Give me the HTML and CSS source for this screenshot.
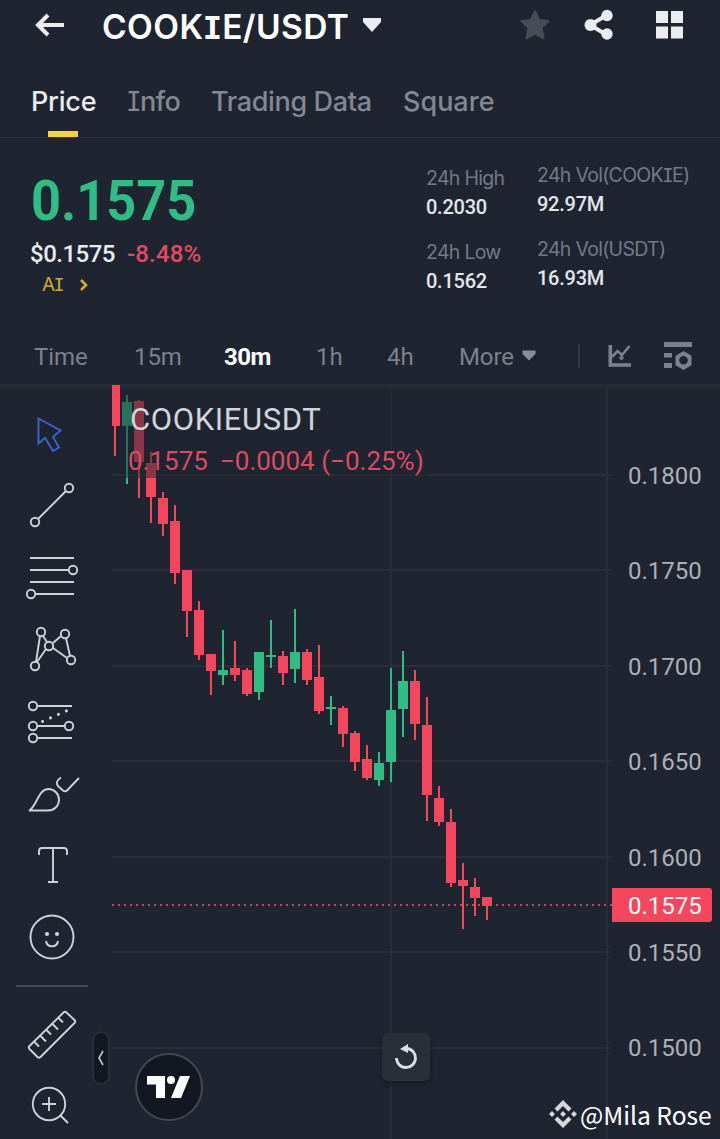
FILE: index.html
```html
<!DOCTYPE html>
<html lang="en">
<head>
<meta charset="utf-8">
<title>COOKIE/USDT</title>
<link rel="stylesheet" href="styles.css">
</head>
<body>
<header class="topbar">
  <svg class="back" width="32" height="24" viewBox="0 0 32 24"><path d="M15 2 5 12l10 10M4 12h27" fill="none" stroke="#eaecef" stroke-width="4"/></svg>
  <h1 class="pair"><span>COOK<span class="slab">I</span>E/USDT</span></h1>
  <svg class="caret" width="20" height="16" viewBox="0 0 20 16"><path d="M1 1h18v4l-9 10L1 5z" fill="#eaecef"/></svg>
  <svg class="star" width="32" height="32" viewBox="0 0 32 32"><path d="m16 2.500 4 8.700 9.300 1-7 6.500 2 10.300-8.300-4.700L7.700 29l2-10.300-7-6.500 9.300-1z" fill="#474d57" stroke="#474d57" stroke-width="2.500" stroke-linejoin="round"/></svg>
  <svg class="share" width="32" height="32" viewBox="0 0 32 32"><g fill="#eaecef"><path d="M7 16 24 6M7 16l17 10" stroke="#eaecef" stroke-width="4"/><circle cx="7.500" cy="16" r="6"/><circle cx="24" cy="6.500" r="5.700"/><circle cx="24" cy="25" r="5.700"/></g></svg>
  <svg class="apps" width="28" height="28" viewBox="0 0 28 28"><path d="M0 0h12v12H0zM15 0h12v12H15zM0 15.500h12v12H0zM15 15.500h12v12H15z" fill="#eaecef"/></svg>
</header>

<nav class="tabs">
  <a class="tab tab-on">Price</a>
  <a class="tab tab-info"><span class="slab">I</span>nfo</a>
  <a class="tab tab-data">Trading Data</a>
  <a class="tab tab-square">Square</a>
</nav>

<section class="summary">
  <div class="quote">
    <div class="last">0.1575</div>
    <div class="sub"><span class="usd">$0.1575</span><span class="chg">-8.48%</span></div>
    <div class="ai"><span>A<span class="slab">I</span></span><svg width="10" height="14" viewBox="0 0 10 14"><path d="m2 2 5 5-5 5" fill="none" stroke="#d3aa35" stroke-width="2.600"/></svg></div>
  </div>
  <dl class="stats stats-price">
    <dt>24h High</dt><dd>0.2030</dd>
    <dt class="low">24h Low</dt><dd>0.1562</dd>
  </dl>
  <dl class="stats stats-vol">
    <dt>24h Vol(COOK<span class="slab">I</span>E)</dt><dd>92.97M</dd>
    <dt>24h Vol(USDT)</dt><dd>16.93M</dd>
  </dl>
</section>

<nav class="frames">
  <span>Time</span><span>15m</span><span class="frame-on">30m</span><span>1h</span><span>4h</span>
  <span class="more">More<svg width="14" height="11" viewBox="0 0 14 11"><path d="M.5.500h13V4L7 10.500.500 4z" fill="#848e9c"/></svg></span>
  <i class="sep"></i>
  <svg class="tool-ind" width="24" height="24" viewBox="0 0 24 24"><g fill="none" stroke="#7c818d" stroke-width="3.600"><path d="M2.300 1v20H23"/><path d="m4 13 5.500-6 4.500 4 7.500-9" stroke-width="2.600"/></g><path d="m13.500 11 3 3.500h-6zM12.500 13h2v3h-2zM10.500 16.500h6" fill="#7c818d"/></svg>
  <svg class="tool-set" width="28" height="28" viewBox="0 0 28 28"><g fill="#7c818d"><path d="M0 0h28v5H0zM0 11h8v4.500H0zM0 21h8v5H0z"/><path fill-rule="evenodd" d="m19.500 9 8 4.700v9.500l-8 4.800-8-4.800v-9.500zM19.500 14a4.300 4.300 0 1 0 0 8.600 4.300 4.300 0 0 0 0-8.600z"/></g></svg>
</nav>

<main class="chart">
  <aside class="drawbar">
    <svg width="108" height="751" viewBox="0 388 108 751">
      <g fill="none" stroke="#ced1da" stroke-width="1.900" stroke-linejoin="round">
        <path d="M38.500 418.500v25l6.500-5.500 8 13 6-3.500-6-10.500 7.500-6.500z" stroke="#3a62d0" stroke-linejoin="miter"/>
        <circle cx="69" cy="488" r="4.200"/><circle cx="35" cy="522" r="4.200"/><path d="m38 519 28-28"/>
        <path d="M30 558h44M30 570h39M30 582h44M35 594h39"/><circle cx="73" cy="570" r="4.200"/><circle cx="31" cy="594" r="4.200"/>
        <circle cx="41" cy="632" r="4.200"/><circle cx="65" cy="634" r="4.200"/><circle cx="49" cy="646" r="4.200"/><circle cx="71" cy="660" r="4.200"/><circle cx="35" cy="666" r="4.200"/>
        <path d="m40 636-4 26M43 636l4 6M61 636l-8 7M46 649l-9 13M53 648l14 10M66 638l4 18"/>
        <circle cx="33" cy="706" r="4.200"/><circle cx="33" cy="726" r="4.200"/><circle cx="69" cy="726" r="4.200"/><circle cx="33" cy="738" r="4.200"/>
        <path d="M37 706h35M37 726h28M37 738h35"/><path d="m42.500 721.500 27-12" stroke-width="3" stroke-linecap="round" stroke-dasharray=".1 8.600"/>
        <path d="M29.500 810.500c8-6 9-21.500 19-21.500 6 0 10.500 5 10.500 11 0 6-5 10.500-11 10.500z"/>
        <path d="M61 777.500c-5 3-5 6.500-2.500 9l4.500 4c1.500 1 3 1 4.500-.5L79 778"/>
        <path d="M39 855v-4q0-3 3-3h22q3 0 3 3v4M53 848v34M48 882h10"/>
        <circle cx="52" cy="937" r="21.500"/><path d="M46 941c1 7 11 7 12 0"/>
      </g>
      <circle cx="47" cy="934" r="2.100" fill="#ced1da"/><circle cx="57" cy="934" r="2.100" fill="#ced1da"/>
      <path d="M16 986h72" stroke="#434751" stroke-width="2"/>
      <g fill="none" stroke="#ced1da" stroke-width="1.900" stroke-linejoin="round">
        <path d="m29.500 1046 34-33.500q1.500-1.500 3 0l8 7.500q1.500 1.500 0 3l-34 34q-1.500 1.500-3 0l-8-8q-1.500-1.500 0-3zM34 1041.500l5 5M40 1035.500l6 6M46 1029.500l5 5M52 1023.500l6 6M58 1017.500l5 5"/>
        <circle cx="49" cy="1104" r="16.200"/><path d="M49 1097v14M42 1104h14M60.500 1115.500l7.500 7.500"/>
      </g>
    </svg>
    <button class="fold"><svg width="8" height="16" viewBox="0 0 8 16"><path d="M6 1 2 8l4 7" fill="none" stroke="#c6c9d1" stroke-width="1.600"/></svg></button>
  </aside>
  <div class="plot">
    <svg id="candles" class="candles" width="500" height="754" viewBox="112 385 500 754"></svg>
    <div class="legend"><div class="symbol">COOKIEUSDT</div><div class="move"><span>0.1575</span><span>−0.0004 (−0.25%)</span></div></div>
    <div class="brand"><svg width="44" height="22" viewBox="0 0 44 22"><path d="M0 0h18v22H9V8.500H0z" fill="#fff"/><circle cx="24" cy="4" r="4" fill="#fff"/><path d="M33 0h10l-9 22H24z" fill="#fff"/></svg></div>
    <button class="reset"><svg width="24" height="26" viewBox="0 0 24 26"><path d="M2.500 14a9.500 9.500 0 1 0 10-9.500" fill="none" stroke="#dcdfe6" stroke-width="2.800"/><path d="M14 0v9L6 5z" fill="#dcdfe6"/></svg></button>
  </div>
  <div class="axis">
    <span>0.1800</span><span>0.1750</span><span>0.1700</span><span>0.1650</span><span>0.1600</span><span>0.1550</span><span>0.1500</span>
    <b class="tag">0.1575</b>
  </div>
  <div class="credit">
    <svg width="28" height="28" viewBox="0 0 28 28"><g fill="#d5d7db"><path d="m14 0 8.500 8.500-3 3L14 6l-5.500 5.500-3-3zM14 28l8.500-8.500-3-3L14 22l-5.500-5.500-3 3zM14 11l3 3-3 3-3-3zM3 11l3 3-3 3-3-3zM25 11l3 3-3 3-3-3z"/></g></svg>
    <span>@Mila Rose</span>
  </div>
</main>
<script src="chart.js"></script>
</body>
</html>
```
FILE: styles.css
```css
* { box-sizing: border-box; }
body { margin: 0; width: 720px; height: 1139px; overflow: hidden; background: #1f2530; font-family: Roboto, "Liberation Sans", sans-serif; }
svg { display: block; flex: none; }
button { padding: 0; border: 0; }
/* Capital I with crossbars, as in the brand typeface. */
.slab { margin: 0 -.04em; font-family: "DejaVu Sans Mono", monospace; font-size: .96em; line-height: 1; }

.topbar { display: flex; align-items: center; height: 50px; padding-left: 33px; }
.pair { width: 245px; margin: 4px 0 0 37px; color: #fff; font: 600 33.500px/40px Inter, sans-serif; letter-spacing: .4px; white-space: nowrap; }
.pair .slab { margin: 0 -.01em 0 -.02em; }
.caret { margin-left: 15px; }
.star { margin-left: 137px; }
.share { margin-left: 32px; }
.apps { margin-left: 41px; }

.tabs { display: flex; height: 88px; border-bottom: 1px solid #2d323d; color: #848893; font: 500 27px/36px Inter, sans-serif; white-space: nowrap; }
.tab { padding-top: 34px; }
.tab-on { display: flex; flex-direction: column; align-items: flex-start; width: 96px; margin-left: 31px; color: #eaecef; letter-spacing: -.2px; }
.tab-on::after { content: ""; width: 30px; height: 6px; margin: 11px 0 0 17px; background: #f8d33a; }
.tab-info { width: 84px; letter-spacing: -.6px; }
.tab-data { width: 192px; letter-spacing: -.35px; }

.summary { display: flex; height: 187px; }
.quote { width: 395px; padding-left: 31px; }
.last { margin-top: 32px; color: #2ebd85; font-weight: 700; font-size: 56px; line-height: 62px; transform: scaleX(.935); transform-origin: left; }
.sub { display: flex; margin: 8px 0 0 -1px; font-size: 24px; font-weight: 500; line-height: 28px; letter-spacing: -.5px; }
.usd { width: 97px; color: #eaecef; }
.chg { color: #e04b62; letter-spacing: .15px; }
.ai { display: flex; align-items: center; gap: 16px; margin: 5px 0 0 11px; color: #d3aa35; font: 400 19px/24px Inter, sans-serif; letter-spacing: -.8px; }
.stats { margin: 0; padding: 28px 0 0 31px; white-space: nowrap; }
.stats-price { width: 142px; }
.stats-vol { width: 183px; padding: 25px 0 0; }
.stats dt { height: 24px; color: #747985; font: 400 19.500px/24px Inter, sans-serif; letter-spacing: -.7px; }
.stats dd { margin: 5px 0 20px; color: #e2e5ec; font-size: 20px; font-weight: 500; line-height: 25px; letter-spacing: -.25px; }

.frames { display: grid; grid-template-columns: 100px 90px 92px 71px 72px 119px 30px 56px 28px; align-items: center; height: 63px; padding: 5px 0 0 34px; border-bottom: 4px solid #262b36; color: #7c818d; font-size: 24px; letter-spacing: -.1px; }
.frame-on { color: #fff; font-weight: 700; letter-spacing: -.5px; }
.more { display: flex; align-items: center; gap: 8px; }
.more svg { margin-top: -4px; }
.sep { width: 2px; height: 24px; margin-top: -3px; background: #353a46; }
.tool-ind, .tool-set { margin-top: -3px; }

.chart { position: relative; display: flex; height: 751px; }
.drawbar { position: relative; width: 112px; }
.fold { position: absolute; left: 92px; top: 643px; display: grid; place-items: center; width: 18px; height: 54px; border: 2px solid #292e39; border-radius: 9px; background: #131722; }
.plot { position: relative; width: 500px; }
.candles { margin-top: -3px; }
.legend { position: absolute; left: 10px; top: 0; width: 306px; height: 90px; padding: 12px 0 0 6px; background: rgba(31, 37, 48, .5); color: #d1d4dc; white-space: nowrap; }
.symbol { padding: 1px 0 0 2px; font-size: 31px; line-height: 38px; letter-spacing: .6px; }
.move { display: flex; gap: 12px; margin-top: 3px; color: #dc4b60; font-size: 26px; line-height: 38px; }
.brand { position: absolute; left: 23px; top: 665px; display: grid; place-items: center; width: 68px; height: 68px; border: 2px solid #434751; border-radius: 50%; background: #131722; }
.reset { position: absolute; left: 270px; top: 645px; display: grid; place-items: center; width: 48px; height: 48px; border-radius: 6px; background: #2a2e39; box-shadow: 0 3px 5px rgba(0, 0, 0, .3); }
.axis { position: relative; display: flex; flex-direction: column; width: 108px; padding: 40px 0 0 16px; color: #adb0b9; font-size: 24px; }
.axis span { height: 95.400px; line-height: 96px; }
.tag { position: absolute; left: 0; top: 500px; width: 100px; height: 34px; padding-left: 16px; border-radius: 0 3px 3px 0; background: #f6465d; color: #fff; font-weight: 400; line-height: 36px; }
.credit { position: absolute; left: 549px; top: 709px; display: flex; align-items: center; gap: 3px; color: #fff; font: 400 24.600px/34px "Noto Sans CJK SC", sans-serif; white-space: nowrap; }
```
FILE: chart.js
```js
// Each row: centre x, high, body top, body bottom, low, rising.
const candles = [
  [115, 385, 385, 426, 456, 0], [127, 395, 402, 426, 484, 1], [139, 400, 401, 462, 498, 0],
  [151, 452, 463, 497, 523, 0], [163, 492, 498, 524, 536, 0], [175, 505, 521, 573, 584, 0],
  [187, 570, 570, 611, 637, 0], [199, 601, 610, 655, 660, 0], [211, 654, 654, 671, 695, 0],
  [223, 630, 670, 675, 685, 1], [235, 641, 668, 675, 681, 0], [247, 668, 670, 694, 696, 0],
  [259, 652, 652, 692, 700, 1], [271, 620, 655, 657, 668, 1], [283, 651, 656, 673, 685, 0],
  [295, 609, 652, 669, 683, 1], [307, 649, 652, 680, 685, 0], [319, 645, 677, 711, 714, 0],
  [331, 696, 707, 709, 725, 1], [343, 706, 708, 734, 747, 0], [355, 731, 733, 762, 771, 0],
  [367, 745, 759, 778, 780, 0], [379, 752, 763, 780, 786, 1], [391, 668, 710, 762, 782, 1],
  [403, 651, 681, 709, 737, 1], [415, 670, 681, 724, 740, 0], [427, 697, 725, 795, 821, 0],
  [439, 786, 798, 822, 826, 0], [451, 809, 822, 883, 887, 0], [463, 863, 880, 886, 929, 0],
  [475, 878, 887, 898, 916, 0], [487, 897, 897, 906, 920, 0]
];
const rows = [475, 570, 666, 761, 857, 952, 1048];
let out = '<g stroke="#2a2e39" stroke-width="2">';
for (const y of rows) out += `<path d="M112 ${y}H611"/>`;
out += '<path d="M391 388V1139M607 388V1139"/></g>';
out += '<path d="M112 905H612" stroke="#b94b5d" stroke-width="2" stroke-dasharray="2 4"/>';
for (const [x, high, top, bottom, low, up] of candles) {
  out += `<g fill="${up ? '#2ebd85' : '#f6465d'}"><rect x="${x - 1}" y="${high}" width="2" height="${low - high}"/>` +
    `<rect x="${x - 5}" y="${top}" width="10" height="${bottom - top}"/></g>`;
}
document.getElementById('candles').innerHTML = out;
```
